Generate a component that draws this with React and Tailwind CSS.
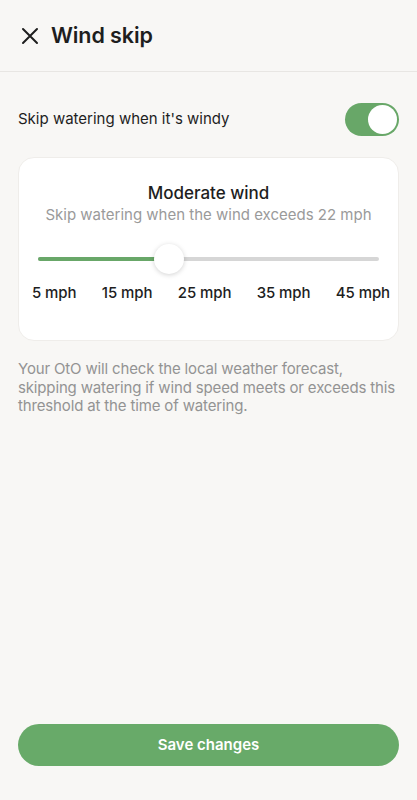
import { useState } from "react";

const font = { fontFamily: "Inter, 'Noto Sans', sans-serif" };

export default function App() {
  const [enabled, setEnabled] = useState(true);
  const [speed] = useState(22);

  // thumb position along the track, as in the app
  const pct = 38.3;

  return (
    <div className="min-h-[800px] w-full bg-[#f8f7f5] flex flex-col text-[#1e1e1e]" style={font}>
      {/* Header */}
      <div className="h-[72px] flex items-center gap-[12px] px-[21px] border-b border-[#e8e6e3]">
        <svg width="18" height="18" viewBox="0 0 18 18" fill="none" stroke="#1e1e1e" strokeWidth="2" strokeLinecap="round">
          <path d="M2 2 L16 16 M16 2 L2 16" />
        </svg>
        <h1 className="text-[21.5px] font-semibold tracking-[-0.1px]">Wind skip</h1>
      </div>

      <div className="flex-1 flex flex-col px-[18px]">
        {/* Toggle row */}
        <div className="flex items-center justify-between mt-[30px] h-[34px]">
          <span className="text-[15px] font-normal">Skip watering when it's windy</span>
          <button
            onClick={() => setEnabled(!enabled)}
            className={`w-[54px] h-[33px] rounded-full p-[2px] flex items-center ${enabled ? "bg-[#68a768] justify-end" : "bg-[#d4d4d4] justify-start"}`}
          >
            <span className="w-[29px] h-[29px] rounded-full bg-white block" />
          </button>
        </div>

        {/* Card */}
        <div className="mt-[21px] bg-white rounded-[16px] border border-[#efedea] pt-[24px] pb-[37px] px-[14px]">
          <div className="text-center">
            <div className="text-[17px] font-medium leading-[22px]">Moderate wind</div>
            <div className="text-[15px] text-[#9a9a9a] leading-[20px] mt-[1px]">
              Skip watering when the wind exceeds {speed} mph
            </div>
          </div>

          <div className="relative h-[30px] mx-[5px] mt-[19px] flex items-center">
            <div className="w-full h-[4px] rounded-full bg-[#d6d6d6]" />
            <div className="absolute left-0 h-[4px] rounded-full bg-[#68a768]" style={{ width: `${pct}%` }} />
            <div
              className="absolute w-[30px] h-[30px] rounded-full bg-white shadow-[0_1px_5px_rgba(0,0,0,0.18)] -translate-x-1/2"
              style={{ left: `${pct}%` }}
            />
          </div>

          <div className="flex justify-between mt-[9px] ml-[-1px] mr-[-6px] text-[15px] font-medium leading-[20px] tracking-[-0.1px]">
            {["5 mph", "15 mph", "25 mph", "35 mph", "45 mph"].map((l) => (
              <span key={l}>{l}</span>
            ))}
          </div>
        </div>

        <p className="mt-[19px] text-[15px] leading-[18.5px] text-[#939393] tracking-[-0.15px]">
          Your OtO will check the local weather forecast, skipping watering if wind speed meets or exceeds this threshold at the time of watering.
        </p>

        <div className="flex-1" />

        <button className="mb-[34px] h-[42px] w-full rounded-full bg-[#68aa69] text-white text-[15px] font-semibold">
          Save changes
        </button>
      </div>
    </div>
  );
}
